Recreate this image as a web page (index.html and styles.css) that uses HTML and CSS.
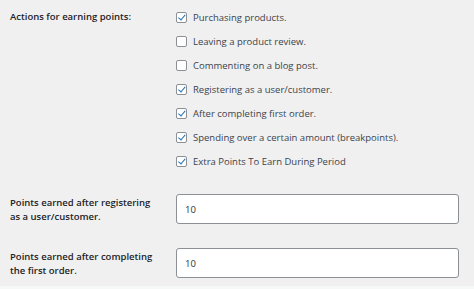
FILE: index.html
```html
<!DOCTYPE html>
<html>
<head>
<meta charset="utf-8">
<link rel="stylesheet" href="styles.css">
</head>
<body>
<div class="form">
  <div class="row row-actions">
    <div class="label">Actions for earning points:</div>
    <div class="checks">
      <label class="check"><span class="box on"></span>Purchasing products.</label>
      <label class="check"><span class="box"></span>Leaving a product review.</label>
      <label class="check"><span class="box"></span>Commenting on a blog post.</label>
      <label class="check"><span class="box on"></span>Registering as a user/customer.</label>
      <label class="check"><span class="box on"></span>After completing first order.</label>
      <label class="check"><span class="box on"></span>Spending over a certain amount (breakpoints).</label>
      <label class="check"><span class="box on"></span>Extra Points To Earn During Period</label>
    </div>
  </div>
  <div class="row row-input first">
    <div class="label">Points earned after registering as a user/customer.</div>
    <div class="field"><div class="input">10</div></div>
  </div>
  <div class="row row-input second">
    <div class="label">Points earned after completing the first order.</div>
    <div class="field"><div class="input">10</div></div>
  </div>
</div>
<div class="foot"></div>
</body>
</html>
```

FILE: styles.css
```css
html, body {
  margin: 0;
  padding: 0;
  background: #f0f0f1;
}
body {
  font-family: "Open Sans", "Noto Sans", sans-serif;
  font-size: 9.5px;
  color: #3c434a;
  height: 289px;
  display: flex;
  flex-direction: column;
}
.form {
  padding: 5px 15px 0 10px;
  flex: 1;
}
.row {
  display: grid;
  grid-template-columns: 166px 1fr;
}
.label {
  font-weight: 600;
  color: #1d2327;
  line-height: 14px;
  width: 150px;
}
.row-actions .label {
  padding-top: 5px;
}
.checks {
  display: flex;
  flex-direction: column;
}
.check {
  display: flex;
  align-items: center;
  height: 24px;
}
.box {
  width: 9px;
  height: 9px;
  border: 1px solid #8c8f94;
  border-radius: 2px;
  background: #fff;
  margin-right: 6px;
  position: relative;
  flex: none;
}
.box.on::after {
  content: "";
  position: absolute;
  left: 2.5px;
  top: 0px;
  width: 2.5px;
  height: 5.5px;
  border-right: 1.6px solid #2271b1;
  border-bottom: 1.6px solid #2271b1;
  transform: rotate(40deg);
}
.row-input .label {
  padding-top: 2px;
}
.row-input.first {
  margin-top: 21px;
}
.row-input.second {
  margin-top: 24px;
}
.input {
  height: 28px;
  border: 1px solid #8c8f94;
  border-radius: 3px;
  background: #fff;
  display: flex;
  align-items: center;
  padding-left: 8px;
  color: #2c3338;
}
.foot {
  height: 3px;
  background: #f6f7f7;
}
```
